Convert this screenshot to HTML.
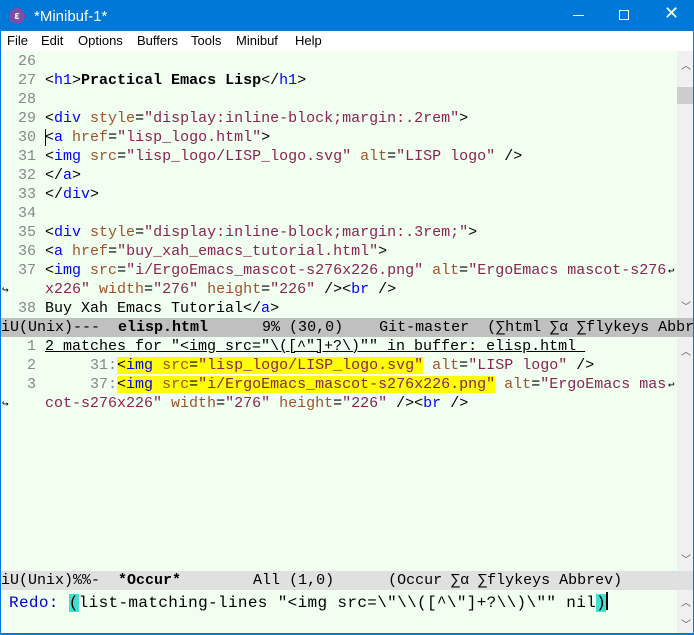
<!DOCTYPE html>
<html><head><meta charset="utf-8"><style>
*{margin:0;padding:0;box-sizing:border-box}
body{width:694px;height:635px;overflow:hidden;background:#0078d7;position:relative;font-family:"Liberation Mono","DejaVu Sans Mono",monospace}
.title{position:absolute;left:0;top:0;width:694px;height:31px;background:#0078d7;color:#fff;font:14px "Liberation Sans",sans-serif}
.menu{position:absolute;left:1px;top:31px;width:692px;height:20px;background:#fff;font:13px "Liberation Sans",sans-serif;color:#000}
.menu span{position:absolute;top:2px}
.win{position:absolute;left:1px;width:676px;background:#f0fff0}
.sb{position:absolute;left:677px;width:16px;background:#f0f0f0}
.l{position:absolute;left:0;height:19px;font-size:15px;line-height:19px;white-space:pre;color:#000}
.n{position:absolute;width:36px;text-align:right;color:#888;font-size:15px;line-height:19px}
.t{color:#0000ff}.a{color:#a0522d}.s{color:#8b2252}
.ml{position:absolute;left:1px;width:692px;height:19px;background:#c0c0c0;font-size:15px;line-height:19px;white-space:pre;color:#000;overflow:hidden}
.hl{background:#ffff00}
.arr{position:absolute;left:2px;font-size:11px}
</style></head><body>
<div class="title">
<div style="position:absolute;left:9px;top:8px;width:16px;height:16px;border-radius:50%;background:#7b4fa8;color:#fff;font:bold 11px 'Liberation Sans';text-align:center;line-height:16px">ε</div>
<div style="position:absolute;left:34px;top:8px;font-size:15px">*Minibuf-1*</div>
<div style="position:absolute;left:573px;top:15px;width:11px;height:1px;background:#fff"></div>
<div style="position:absolute;left:619px;top:10px;width:10px;height:10px;border:1px solid #fff"></div>
<div style="position:absolute;left:664px;top:3px;font-size:18px;font-weight:300">✕</div>
</div>
<div class="menu"><span style="left:6px">File</span><span style="left:40px">Edit</span><span style="left:77px">Options</span><span style="left:136px">Buffers</span><span style="left:190px">Tools</span><span style="left:235px">Minibuf</span><span style="left:294px">Help</span></div>

<div class="win" style="top:51px;height:267px"></div>
<div class="sb" style="top:51px;height:267px"><div style="position:absolute;top:6px;left:4px;font-size:10px;color:#555">︿</div><div style="position:absolute;top:36px;left:0;width:16px;height:17px;background:#cdcdcd"></div><div style="position:absolute;top:247px;left:4px;font-size:10px;color:#555">﹀</div></div>

<div class="n" style="top:52px">26</div>
<div class="n" style="top:71px">27</div><div class="l" style="top:71px;left:45px">&lt;<span class="t">h1</span>&gt;<b>Practical Emacs Lisp</b>&lt;/<span class="t">h1</span>&gt;</div>
<div class="n" style="top:90px">28</div>
<div class="n" style="top:109px">29</div><div class="l" style="top:109px;left:45px">&lt;<span class="t">div</span> <span class="a">style</span>=<span class="s">"display:inline-block;margin:.2rem"</span>&gt;</div>
<div class="n" style="top:128px">30</div><div class="l" style="top:128px;left:45px">&lt;<span class="t">a</span> <span class="a">href</span>=<span class="s">"lisp_logo.html"</span>&gt;</div><div style="position:absolute;left:45px;top:129px;width:1px;height:17px;background:#000"></div>
<div class="n" style="top:147px">31</div><div class="l" style="top:147px;left:45px">&lt;<span class="t">img</span> <span class="a">src</span>=<span class="s">"lisp_logo/LISP_logo.svg"</span> <span class="a">alt</span>=<span class="s">"LISP logo"</span> /&gt;</div>
<div class="n" style="top:166px">32</div><div class="l" style="top:166px;left:45px">&lt;/<span class="t">a</span>&gt;</div>
<div class="n" style="top:185px">33</div><div class="l" style="top:185px;left:45px">&lt;/<span class="t">div</span>&gt;</div>
<div class="n" style="top:204px">34</div>
<div class="n" style="top:223px">35</div><div class="l" style="top:223px;left:45px">&lt;<span class="t">div</span> <span class="a">style</span>=<span class="s">"display:inline-block;margin:.3rem;"</span>&gt;</div>
<div class="n" style="top:242px">36</div><div class="l" style="top:242px;left:45px">&lt;<span class="t">a</span> <span class="a">href</span>=<span class="s">"buy_xah_emacs_tutorial.html"</span>&gt;</div>
<div class="n" style="top:261px">37</div><div class="l" style="top:261px;left:45px">&lt;<span class="t">img</span> <span class="a">src</span>=<span class="s">"i/ErgoEmacs_mascot-s276x226.png"</span> <span class="a">alt</span>=<span class="s">"ErgoEmacs mascot-s276</span></div><div class="arr" style="top:264px;left:668px">↩</div>
<div class="arr" style="top:283px">↪</div><div class="l" style="top:280px;left:45px"><span class="s">x226"</span> <span class="a">width</span>=<span class="s">"276"</span> <span class="a">height</span>=<span class="s">"226"</span> /&gt;&lt;<span class="t">br</span> /&gt;</div>
<div class="n" style="top:299px">38</div><div class="l" style="top:299px;left:45px">Buy Xah Emacs Tutorial&lt;/<span class="t">a</span>&gt;</div>

<div class="ml" style="top:318px">iU(Unix)---  <b>elisp.html</b>      9% (30,0)    Git-master  (∑html ∑α ∑flykeys Abbr</div>

<div class="win" style="top:337px;height:234px"></div>
<div class="sb" style="top:337px;height:234px"><div style="position:absolute;top:6px;left:4px;font-size:10px;color:#555">︿</div><div style="position:absolute;top:214px;left:4px;font-size:10px;color:#555">﹀</div></div>
<div class="n" style="top:337px">1</div><div class="l" style="top:337px;left:45px;text-decoration:underline">2 matches for "&lt;img src="\([^"]+?\)"" in buffer: elisp.html </div>
<div class="n" style="top:356px">2</div><div class="l" style="top:356px;left:45px"><span style="color:#888">     31:</span><span class="hl">&lt;<span class="t">img</span> <span class="a">src</span>=<span class="s">"lisp_logo/LISP_logo.svg"</span></span> <span class="a">alt</span>=<span class="s">"LISP logo"</span> /&gt;</div>
<div class="n" style="top:375px">3</div><div class="l" style="top:375px;left:45px"><span style="color:#888">     37:</span><span class="hl">&lt;<span class="t">img</span> <span class="a">src</span>=<span class="s">"i/ErgoEmacs_mascot-s276x226.png"</span></span> <span class="a">alt</span>=<span class="s">"ErgoEmacs mas</span></div><div class="arr" style="top:378px;left:668px">↩</div>
<div class="arr" style="top:397px">↪</div><div class="l" style="top:394px;left:45px"><span class="s">cot-s276x226"</span> <span class="a">width</span>=<span class="s">"276"</span> <span class="a">height</span>=<span class="s">"226"</span> /&gt;&lt;<span class="t">br</span> /&gt;</div>

<div class="ml" style="top:571px;background:#e0e0e0">iU(Unix)%%-  <b>*Occur*</b>        All (1,0)      (Occur ∑α ∑flykeys Abbrev)</div>

<div class="win" style="top:590px;height:43px"></div>
<div class="sb" style="top:590px;height:43px"><div style="position:absolute;top:4px;left:4px;font-size:10px;color:#555">︿</div><div style="position:absolute;top:26px;left:4px;font-size:10px;color:#555">﹀</div></div>
<div class="l" style="top:592px;left:9px;font-size:16px;letter-spacing:0.35px"><span style="color:#0000cc">Redo: </span><span style="background:#40e0d0">(</span>list-matching-lines "&lt;img src=\"\\([^\"]+?\\)\"" nil<span style="background:#40e0d0">)</span><span style="display:inline-block;width:2px;height:18px;background:#000;vertical-align:-3px"></span></div>
</body></html>
